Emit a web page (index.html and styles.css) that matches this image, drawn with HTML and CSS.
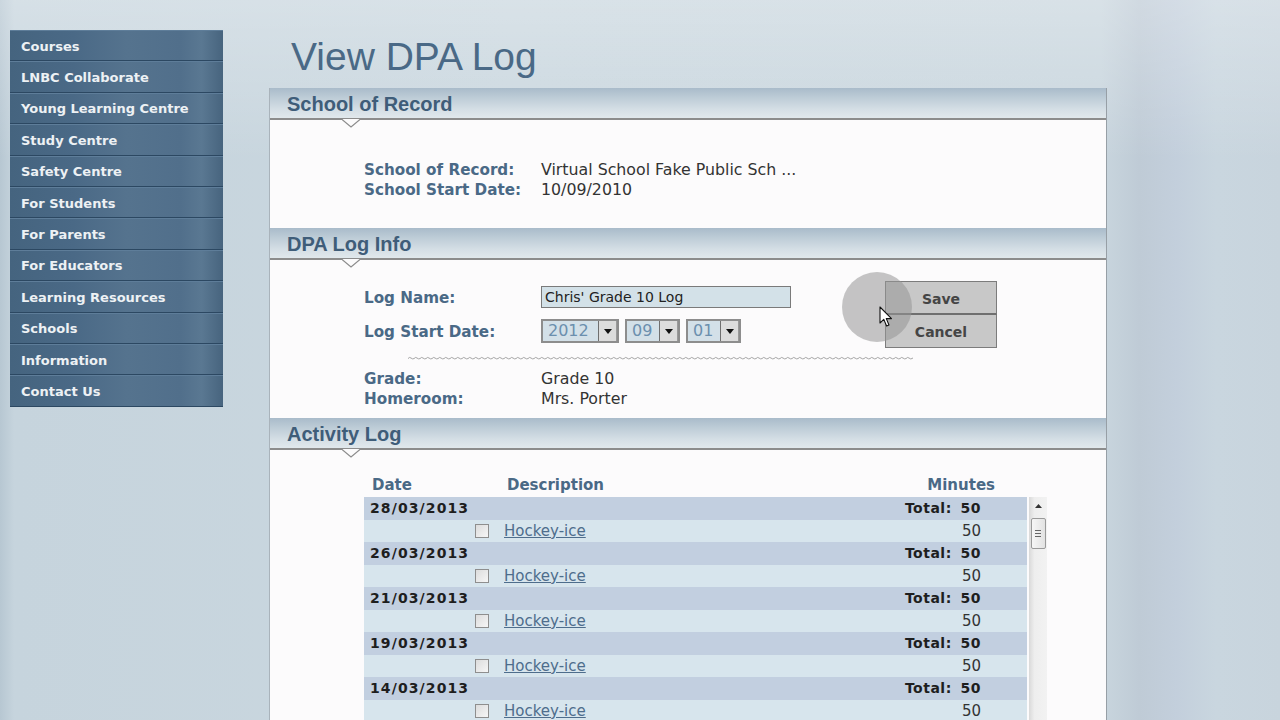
FILE: index.html
```html
<!DOCTYPE html>
<html>
<head>
<meta charset="utf-8">
<title>View DPA Log</title>
<link rel="stylesheet" href="styles.css">
</head>
<body>
<div class="page">
  <nav class="sidebar">
    <a class="nav-item">Courses</a>
    <a class="nav-item">LNBC Collaborate</a>
    <a class="nav-item">Young Learning Centre</a>
    <a class="nav-item">Study Centre</a>
    <a class="nav-item">Safety Centre</a>
    <a class="nav-item">For Students</a>
    <a class="nav-item">For Parents</a>
    <a class="nav-item">For Educators</a>
    <a class="nav-item">Learning Resources</a>
    <a class="nav-item">Schools</a>
    <a class="nav-item">Information</a>
    <a class="nav-item">Contact Us</a>
  </nav>
  <main class="main">
    <h1 class="title">View DPA Log</h1>
    <div class="panel">
      <div class="sec-head">
        <h2 class="sec-title">School of Record</h2>
        <svg class="notch" width="18" height="9" viewBox="0 0 18 9"><path d="M0 0 L9 8 L18 0 Z" fill="#fcfbfc"/><path d="M0 0.5 L9 8 L18 0.5" fill="none" stroke="#8c8c8c" stroke-width="1.2"/></svg>
      </div>
      <div class="sec-body school-body">
        <div class="kv"><span class="k">School of Record:</span><span class="v">Virtual School Fake Public Sch ...</span></div>
        <div class="kv"><span class="k">School Start Date:</span><span class="v">10/09/2010</span></div>
      </div>

      <div class="sec-head">
        <h2 class="sec-title">DPA Log Info</h2>
        <svg class="notch" width="18" height="9" viewBox="0 0 18 9"><path d="M0 0 L9 8 L18 0 Z" fill="#fcfbfc"/><path d="M0 0.5 L9 8 L18 0.5" fill="none" stroke="#8c8c8c" stroke-width="1.2"/></svg>
      </div>
      <div class="sec-body dpa-body">
        <div class="dpa-top">
          <div class="fields">
            <div class="frow">
              <span class="k">Log Name:</span>
              <div class="text-input">Chris' Grade 10 Log</div>
            </div>
            <div class="frow frow-2">
              <span class="k">Log Start Date:</span>
              <div class="selects">
                <div class="sel sel-year"><span class="sel-val">2012</span><span class="sel-btn"><svg width="8" height="5" viewBox="0 0 8 5"><path d="M0 0 H8 L4 5 Z" fill="#111"/></svg></span></div>
                <div class="sel sel-small"><span class="sel-val">09</span><span class="sel-btn"><svg width="8" height="5" viewBox="0 0 8 5"><path d="M0 0 H8 L4 5 Z" fill="#111"/></svg></span></div>
                <div class="sel sel-small"><span class="sel-val">01</span><span class="sel-btn"><svg width="8" height="5" viewBox="0 0 8 5"><path d="M0 0 H8 L4 5 Z" fill="#111"/></svg></span></div>
              </div>
            </div>
          </div>
          <div class="buttons">
            <div class="click-ring"></div>
            <button class="btn btn-save">Save</button>
            <button class="btn btn-cancel">Cancel</button>
            <svg class="cursor" width="14" height="22" viewBox="0 0 14 22"><path d="M1 1 L1 17 L4.8 13.4 L7.6 20 L10 19 L7.3 12.6 L12.5 12.6 Z" fill="#fff" stroke="#111" stroke-width="1.1" stroke-linejoin="round"/></svg>
          </div>
        </div>
        <svg class="wavy" width="505" height="4" viewBox="0 0 505 4">
          <defs><pattern id="wv" width="6" height="4" patternUnits="userSpaceOnUse"><path d="M0 2.6 Q1.5 0.6 3 2 T6 2.6" fill="none" stroke="#9a9a9a" stroke-width="0.9"/></pattern></defs>
          <rect width="505" height="4" fill="url(#wv)"/>
        </svg>
        <div class="info">
          <div class="kv"><span class="k">Grade:</span><span class="v">Grade 10</span></div>
          <div class="kv"><span class="k">Homeroom:</span><span class="v">Mrs. Porter</span></div>
        </div>
      </div>

      <div class="sec-head">
        <h2 class="sec-title">Activity Log</h2>
        <svg class="notch" width="18" height="9" viewBox="0 0 18 9"><path d="M0 0 L9 8 L18 0 Z" fill="#fcfbfc"/><path d="M0 0.5 L9 8 L18 0.5" fill="none" stroke="#8c8c8c" stroke-width="1.2"/></svg>
      </div>
      <div class="sec-body act-body">
        <div class="cols">
          <span class="col-date">Date</span>
          <span class="col-desc">Description</span>
          <span class="col-min">Minutes</span>
        </div>
        <div class="log-wrap">
          <div class="log">
            <div class="drow"><span class="date">28/03/2013</span><span class="total">Total:&nbsp; 50</span></div>
            <div class="irow"><span class="cb"></span><a class="act">Hockey-ice</a><span class="mins">50</span></div>
            <div class="drow"><span class="date">26/03/2013</span><span class="total">Total:&nbsp; 50</span></div>
            <div class="irow"><span class="cb"></span><a class="act">Hockey-ice</a><span class="mins">50</span></div>
            <div class="drow"><span class="date">21/03/2013</span><span class="total">Total:&nbsp; 50</span></div>
            <div class="irow"><span class="cb"></span><a class="act">Hockey-ice</a><span class="mins">50</span></div>
            <div class="drow"><span class="date">19/03/2013</span><span class="total">Total:&nbsp; 50</span></div>
            <div class="irow"><span class="cb"></span><a class="act">Hockey-ice</a><span class="mins">50</span></div>
            <div class="drow"><span class="date">14/03/2013</span><span class="total">Total:&nbsp; 50</span></div>
            <div class="irow"><span class="cb"></span><a class="act">Hockey-ice</a><span class="mins">50</span></div>
          </div>
          <div class="scrollbar">
            <div class="sb-up"><svg width="7" height="4" viewBox="0 0 7 4"><path d="M0 4 L3.5 0 L7 4 Z" fill="#333"/></svg></div>
            <div class="sb-thumb"><span></span><span></span><span></span></div>
          </div>
        </div>
      </div>
    </div>
  </main>
</div>
</body>
</html>
```
FILE: styles.css
```css
html, body {
  margin: 0;
  padding: 0;
}
body {
  width: 1280px;
  height: 720px;
  overflow: hidden;
  font-family: "DejaVu Sans", Verdana, sans-serif;
  background:
    linear-gradient(180deg, rgba(255,255,255,0.28) 0px, rgba(255,255,255,0) 160px),
    linear-gradient(90deg, #b7c7d2 0px, #c6d4dd 14px, #cad7df 40%, #c9d6de 86%, #bfcbd6 89%, #c3cfdc 92%, #c9d6df 95%, #c8d4dd 100%);
}
.page {
  display: flex;
  align-items: flex-start;
  height: 720px;
}

/* sidebar */
.sidebar {
  margin: 30px 0 0 10px;
  width: 213px;
  display: flex;
  flex-direction: column;
}
.nav-item {
  display: flex;
  align-items: center;
  padding-left: 11px;
  padding-top: 1px;
  box-sizing: content-box;
  height: 28.4px;
  font-weight: bold;
  font-size: 13px;
  color: #edf1f4;
  border-top: 1px solid #5e7d99;
  border-bottom: 1px solid #2c4862;
  background: linear-gradient(90deg, #45647f 0%, #4a6986 30%, #55738e 55%, #516f8b 80%, #5a7892 90%, #47647e 100%);
}

/* main */
.main {
  margin-left: 46px;
  width: 838px;
}
.title {
  margin: 0;
  padding: 37px 0 12px 22px;
  height: 39px;
  font-family: "Liberation Sans", Arial, sans-serif;
  font-weight: normal;
  font-size: 39px;
  line-height: 39px;
  color: #4a6986;
}
.panel {
  width: 836px;
  border-left: 1px solid #a9b3bb;
  border-right: 1px solid #979fa6;
  background: #fcfbfc;
  height: 632px;
}
.sec-head {
  position: relative;
  height: 30px;
  border-bottom: 2px solid #8c8c8c;
  background: linear-gradient(180deg, #a9bbca 0%, #bccbd6 30%, #d4dee5 70%, #e1e8ec 100%);
  padding-left: 17px;
}
.sec-title {
  margin: 0;
  font-family: "Liberation Sans", Arial, sans-serif;
  font-weight: bold;
  font-size: 20px;
  line-height: 32px;
  color: #3f5d79;
}
.notch {
  position: absolute;
  left: 72px;
  top: 31px;
}
.sec-body {
  background: #fcfbfc;
}
.k {
  font-weight: bold;
  font-size: 15.2px;
  color: #4a6986;
  width: 177px;
  flex: none;
}
.v {
  color: #333;
}
.kv {
  display: flex;
  align-items: baseline;
  font-size: 15.8px;
  line-height: 19px;
}
.school-body {
  height: 68px;
  padding: 40px 0 0 94px;
}

/* DPA */
.dpa-body {
  height: 158px;
  padding-left: 94px;
  box-sizing: border-box;
  padding-top: 21px;
}
.dpa-top {
  display: flex;
  height: 67px;
}
.fields {
  width: 521px;
  padding-top: 5px;
}
.frow {
  display: flex;
  align-items: center;
  height: 22px;
}
.frow .k {
  padding-top: 1px;
}
.frow-2 {
  margin-top: 11px;
  height: 24px;
}
.text-input {
  width: 245px;
  height: 20px;
  border: 1px solid #7a7a7a;
  background: #d3e1e8;
  font-size: 14px;
  line-height: 20px;
  padding-left: 3px;
  color: #222;
}
.selects {
  display: flex;
  gap: 6px;
}
.sel {
  height: 20px;
  border: 2px solid #8d8d8d;
  background: #d3e0e8;
  display: flex;
  justify-content: space-between;
  align-items: stretch;
}
.sel-year { width: 74px; }
.sel-small { width: 51px; }
.sel-val {
  font-size: 16px;
  line-height: 20px;
  color: #6b8fae;
  padding-left: 5px;
}
.sel-btn {
  width: 17px;
  background: #dcdcdc;
  border-left: 1px solid #6f6f6f;
  border-right: 1px solid #9a9a9a;
  display: flex;
  align-items: center;
  justify-content: center;
}
.buttons {
  position: relative;
  width: 112px;
  display: flex;
  flex-direction: column;
}
.btn {
  margin: 0;
  padding: 2px 0 0 0;
  width: 112px;
  background: #c8c8c8;
  border: 1px solid #7c7c7c;
  font-family: "DejaVu Sans", Verdana, sans-serif;
  font-weight: bold;
  font-size: 14px;
  color: #454545;
}
.btn-save { height: 34px; border-bottom: 2px solid #6f6f6f; }
.btn-cancel { height: 33px; border-top: none; }
.click-ring {
  position: absolute;
  left: -43px;
  top: -9px;
  width: 70px;
  height: 70px;
  border-radius: 50%;
  background: rgba(150, 150, 150, 0.55);
  z-index: 2;
}
.cursor {
  position: absolute;
  left: -6px;
  top: 25px;
  z-index: 3;
}
.wavy {
  display: block;
  margin: 8px 0 0 44px;
}
.info {
  margin-top: 9px;
}

/* Activity */
.act-body {
  padding: 24px 0 0 94px;
}
.cols {
  display: flex;
  width: 663px;
  height: 23px;
  font-weight: bold;
  font-size: 15px;
  line-height: 23px;
  color: #4a6986;
}
.col-date { padding-left: 8px; width: 135px; }
.col-desc { flex: 1; }
.col-min { padding-right: 32px; }
.log-wrap {
  display: flex;
  gap: 2px;
}
.log {
  width: 663px;
}
.drow, .irow {
  height: 22.5px;
  display: flex;
  align-items: center;
  font-size: 15px;
}
.drow {
  background: #c2cfe0;
  font-weight: bold;
  color: #1e1e1e;
  font-size: 14px;
}
.irow {
  background: #d7e5ed;
  color: #333;
}
.date {
  padding-left: 6px;
  letter-spacing: 1.1px;
  flex: 1;
}
.total {
  padding-right: 46px;
  letter-spacing: 0.5px;
  word-spacing: -1px;
}
.cb {
  margin-left: 111px;
  width: 12px;
  height: 12px;
  border: 1px solid #8e8e8e;
  background: linear-gradient(135deg, #dcdcdc, #f6f6f6);
  flex: none;
}
.act {
  margin-left: 15px;
  color: #4e6d8c;
  text-decoration: underline;
  flex: 1;
}
.mins {
  padding-right: 46px;
}
.scrollbar {
  width: 18px;
  height: 230px;
  background: linear-gradient(90deg, #d9d9d9, #eeeeee 30%, #f2f2f2);
  display: flex;
  flex-direction: column;
  align-items: center;
}
.sb-up {
  height: 18px;
  display: flex;
  align-items: center;
  justify-content: center;
}
.sb-thumb {
  margin-top: 3px;
  width: 13px;
  height: 29px;
  border: 1px solid #9a9a9a;
  border-radius: 2px;
  background: linear-gradient(90deg, #f6f6f6, #e2e2e2);
  display: flex;
  flex-direction: column;
  align-items: center;
  justify-content: center;
  gap: 2px;
}
.sb-thumb span {
  width: 6px;
  height: 1px;
  background: #666;
}
```
